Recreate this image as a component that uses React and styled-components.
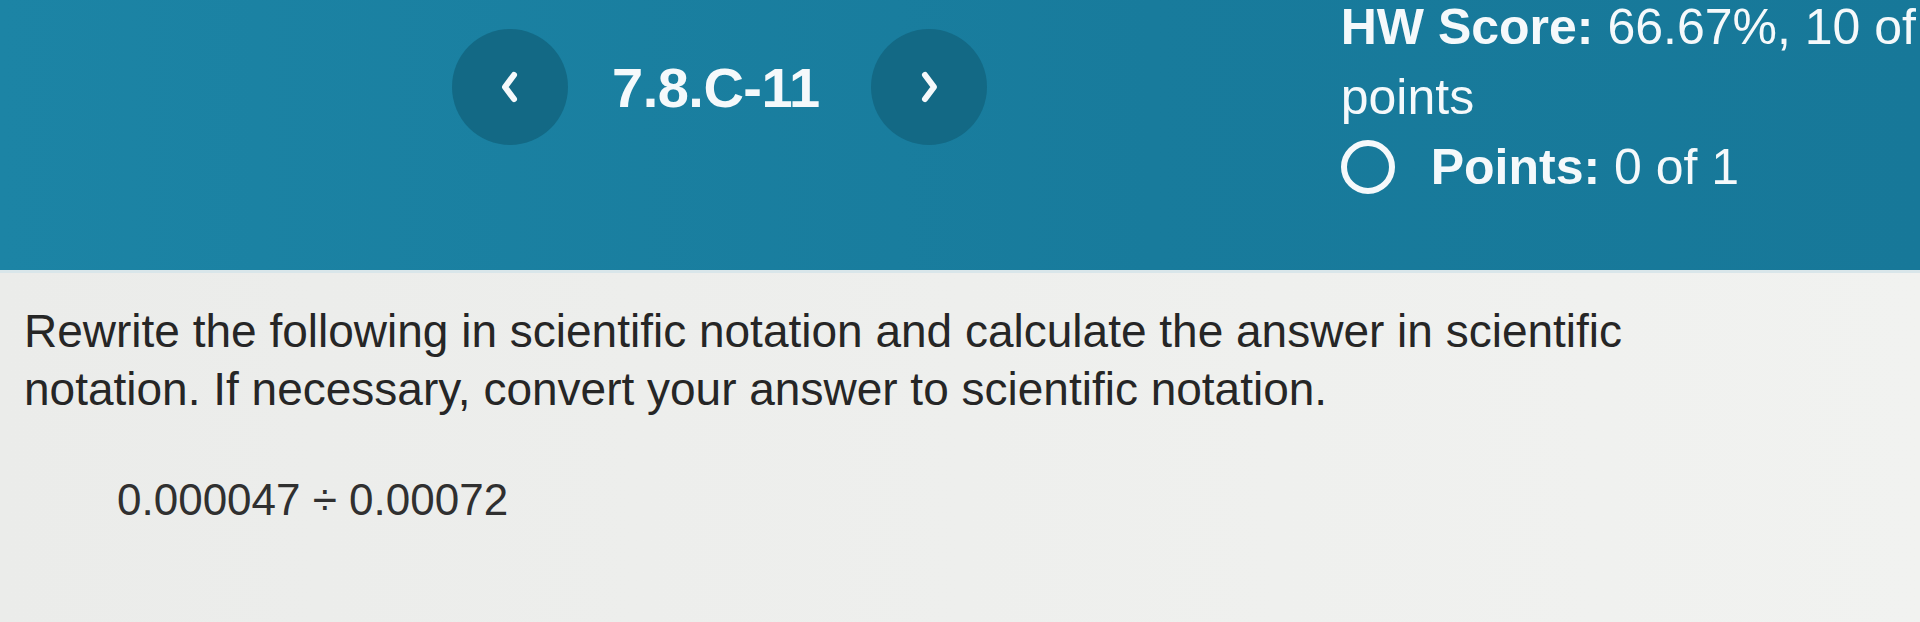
import styled, { createGlobalStyle } from "styled-components";

const GlobalStyle = createGlobalStyle`
  html, body {
    margin: 0;
    padding: 0;
    overflow: hidden;
    background: #eeefec;
  }
  body {
    font-family: "Liberation Sans", Arial, sans-serif;
  }
`;

const Page = styled.div`
  width: 1920px;
  height: 622px;
  overflow: hidden;
  background: linear-gradient(90deg, #ebecea, #f1f2f0);
`;

const Header = styled.header`
  height: 270px;
  display: flex;
  align-items: flex-start;
  background: linear-gradient(90deg, #1c84a5, #187b9c 60%, #177899);
  color: #f5f9fb;
  box-shadow: 0 3px 0 #d9e6ea;
`;

const Nav = styled.div`
  flex: none;
  display: flex;
  align-items: center;
  gap: 44px;
  margin: 29px 0 0 452px;
`;

const NavButton = styled.button`
  flex: none;
  width: 116px;
  height: 116px;
  border-radius: 50%;
  border: none;
  padding: 0;
  background: #136985;
  display: flex;
  align-items: center;
  justify-content: center;
  cursor: pointer;
`;

const Title = styled.h1`
  flex: none;
  margin: 0 7px 0 0;
  font-size: 56px;
  font-weight: 700;
  letter-spacing: -0.5px;
  white-space: nowrap;
`;

const Score = styled.div`
  flex: none;
  margin: -8px 0 0 ${(p) => p.$left}px;
  width: 720px;
  font-size: 50px;
  line-height: 70px;
`;

const ScoreLine = styled.div`
  width: 700px;
`;

const Label = styled.span`
  font-weight: 700;
`;

const PointsRow = styled.div`
  display: flex;
  align-items: center;
  gap: 36px;
`;

const Ring = styled.span`
  width: 42px;
  height: 42px;
  border: 6px solid #f5f9fb;
  border-radius: 50%;
  flex: none;
`;

const Content = styled.main`
  padding: 32px 0 0 24px;
  color: #262626;
`;

const Prompt = styled.p`
  margin: 0;
  width: 1700px;
  font-size: 46px;
  line-height: 58px;
`;

const Expression = styled.div`
  margin: 52px 0 0 93px;
  font-size: 44px;
  line-height: 60px;
  color: #303030;
`;

const Chevron = ({ dir }) => (
  <svg width="20" height="34" viewBox="0 0 20 34">
    <polyline
      points={dir === "left" ? "14,5 5,17 14,29" : "6,5 15,17 6,29"}
      fill="none"
      stroke="#f5f9fb"
      strokeWidth="6"
      strokeLinecap="round"
      strokeLinejoin="round"
    />
  </svg>
);

const App = () => {
  return (
    <Page>
      <GlobalStyle />
      <Header>
        <Nav>
          <NavButton aria-label="Previous question">
            <Chevron dir="left" />
          </NavButton>
          <Title>7.8.C-11</Title>
          <NavButton aria-label="Next question">
            <Chevron dir="right" />
          </NavButton>
        </Nav>
        <Score $left={354}>
          <ScoreLine>
            <Label>HW Score:</Label> 66.67%, 10 of 15 points
          </ScoreLine>
          <PointsRow>
            <Ring />
            <span>
              <Label>Points:</Label> 0 of 1
            </span>
          </PointsRow>
        </Score>
      </Header>
      <Content>
        <Prompt>
          Rewrite the following in scientific notation and calculate the
          answer in scientific notation. If necessary, convert your answer to
          scientific notation.
        </Prompt>
        <Expression>0.000047 ÷ 0.00072</Expression>
      </Content>
    </Page>
  );
};

export default App;
